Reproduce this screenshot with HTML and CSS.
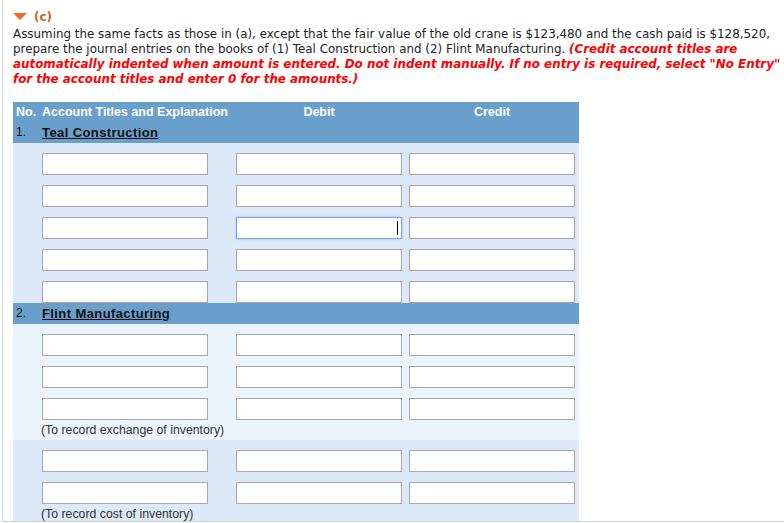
FILE: index.html
```html
<!DOCTYPE html>
<html lang="en">
  <head>
    <meta charset="utf-8" />
    <meta name="viewport" content="width=device-width, initial-scale=1.0" />
    <title>Journal entries (c)</title>
    <link rel="stylesheet" href="styles.css">
  </head>
  <body>
    <div class="panel">
      <div class="part-head">
        <span class="toggle"></span>
        <span class="part-label">(c)</span>
      </div>
      <p class="question">
        Assuming the same facts as those in (a), except that the fair value of the old crane is $123,480 and the cash paid is $128,520,
        prepare the journal entries on the books of (1) Teal Construction and (2) Flint Manufacturing.
        <em class="hint">(Credit account titles are automatically indented when amount is entered. Do not indent manually. If no entry is required, select "No Entry" for the account titles and enter 0 for the amounts.)</em>
      </p>

      <div class="journal">
        <div class="journal-head">
          <div class="line-head">
            <div>No.</div>
            <div>Account Titles and Explanation</div>
            <div class="amount-col">Debit</div>
            <div class="amount-col">Credit</div>
          </div>
          <div class="line-head company-row">
            <div class="num">1.</div>
            <div class="company">Teal Construction</div>
          </div>
        </div>

        <div class="entry">
          <div class="line"><span></span><input type="text"><input type="text"><input type="text"></div>
          <div class="line"><span></span><input type="text"><input type="text"><input type="text"></div>
          <div class="line"><span></span><input type="text"><span class="focused"><input type="text"><i class="caret"></i></span><input type="text"></div>
          <div class="line"><span></span><input type="text"><input type="text"><input type="text"></div>
          <div class="line"><span></span><input type="text"><input type="text"><input type="text"></div>
        </div>

        <div class="journal-head">
          <div class="line-head company-row">
            <div class="num">2.</div>
            <div class="company">Flint Manufacturing</div>
          </div>
        </div>

        <div class="entry entry-alt">
          <div class="line"><span></span><input type="text"><input type="text"><input type="text"></div>
          <div class="line"><span></span><input type="text"><input type="text"><input type="text"></div>
          <div class="line"><span></span><input type="text"><input type="text"><input type="text"></div>
          <div class="note">(To record exchange of inventory)</div>
        </div>

        <div class="entry">
          <div class="line"><span></span><input type="text"><input type="text"><input type="text"></div>
          <div class="line"><span></span><input type="text"><input type="text"><input type="text"></div>
          <div class="note">(To record cost of inventory)</div>
        </div>
      </div>
    </div>
  </body>
</html>
```

FILE: styles.css
```css
* {
  box-sizing: border-box;
}

body {
  margin: 0;
  font-family: "DejaVu Sans", Verdana, sans-serif;
  font-size: 11.9px;
  color: #222;
  background: #fff;
}

.panel {
  margin-left: 2px;
  height: 522px;
  overflow: hidden;
  padding: 9px 0 0 10px;
  border-left: 1px solid #d3d9e0;
  border-bottom: 1px solid #c9d3de;
}

.part-head {
  display: flex;
  align-items: center;
  gap: 7px;
  height: 15px;
}

.toggle {
  width: 0;
  height: 0;
  border-left: 7px solid transparent;
  border-right: 7px solid transparent;
  border-top: 7px solid #f26a1b;
}

.part-label {
  font-weight: bold;
  font-size: 12px;
  color: #c8642a;
}

.question {
  margin: 3px 0 0;
  line-height: 15px;
}

.hint {
  color: #f00;
  font-weight: bold;
}

.journal {
  margin-top: 15px;
  width: 566px;
  font-family: "Liberation Sans", Arial, sans-serif;
  font-size: 12.5px;
}

.journal-head {
  background: #6a9fcc;
  font-weight: bold;
}

.line-head,
.line {
  display: grid;
  grid-template-columns: 22px 187px 166px 166px;
  column-gap: 7px;
}

.line-head {
  height: 20px;
  line-height: 20px;
  color: #fff;
}

.line-head > div:first-child {
  padding-left: 3px;
}

.amount-col {
  text-align: center;
}

.company-row {
  height: 21px;
  line-height: 21px;
  color: #111;
}

.num {
  font-weight: normal;
  font-size: 12px;
}

.company {
  font-size: 13px;
  letter-spacing: 0.4px;
  text-decoration: underline;
}

.entry {
  background: #dde8f8;
}

.entry-alt {
  background: #ebf3fd;
}

.line {
  padding-top: 10px;
}

.line input {
  width: 166px;
  height: 22px;
  margin: 0;
  border: 1px solid #a8a8a8;
  background: #fff;
  font: inherit;
  padding: 0 4px;
  outline: none;
}

.focused {
  position: relative;
}

.focused input {
  border-color: #7ba4e6;
  box-shadow: 0 0 2px #8fb3ee;
}

.caret {
  position: absolute;
  right: 4px;
  top: 4px;
  width: 1px;
  height: 14px;
  background: #000;
}

.note {
  height: 20px;
  line-height: 20px;
  padding-left: 28px;
  font-size: 12.3px;
  color: #333;
}
```
